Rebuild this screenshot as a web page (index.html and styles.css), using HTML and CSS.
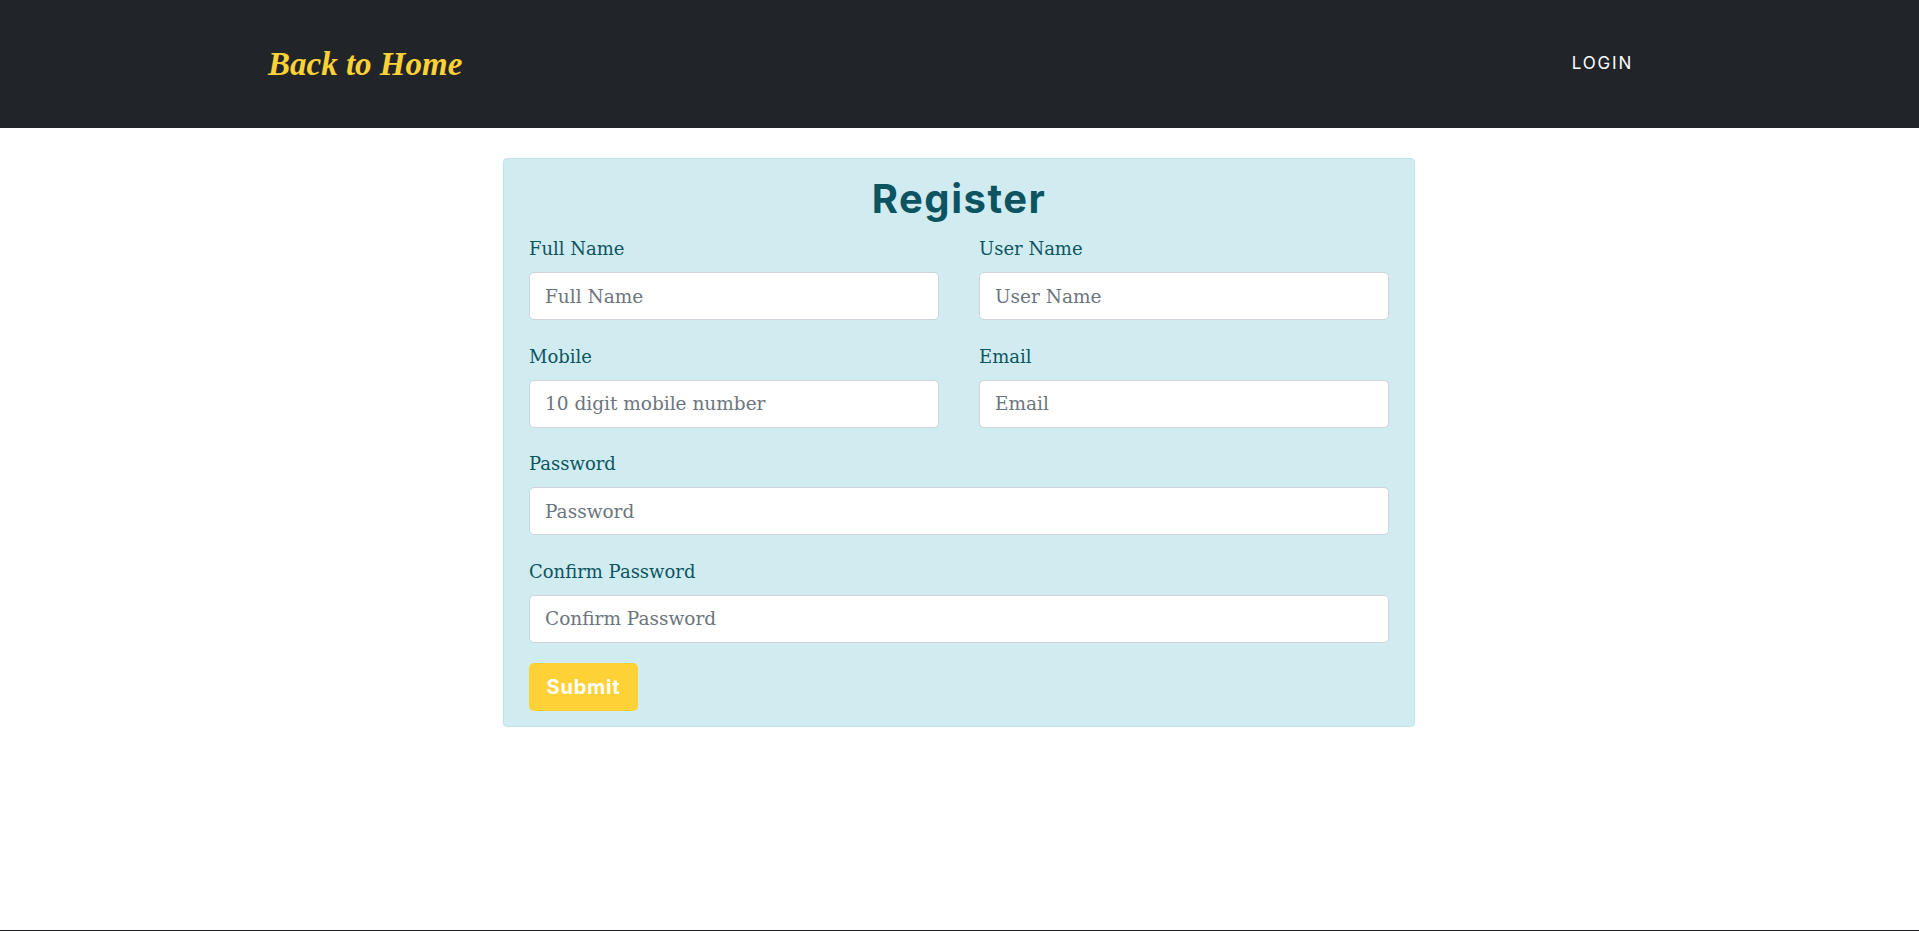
FILE: index.html
```html
<!DOCTYPE html>
<html lang="en">
<head>
<meta charset="utf-8">
<title>Register</title>
<link rel="stylesheet" href="styles.css">
</head>
<body>
<nav class="navbar">
  <a class="brand" href="#">Back to Home</a>
  <a class="nav-link" href="#">Login</a>
</nav>
<main class="main">
  <form class="card">
    <h1 class="title">Register</h1>
    <div class="grid">
      <div class="group">
        <label class="label">Full Name</label>
        <input class="input" type="text" placeholder="Full Name">
      </div>
      <div class="group">
        <label class="label">User Name</label>
        <input class="input" type="text" placeholder="User Name">
      </div>
      <div class="group">
        <label class="label">Mobile</label>
        <input class="input" type="text" placeholder="10 digit mobile number">
      </div>
      <div class="group">
        <label class="label">Email</label>
        <input class="input" type="text" placeholder="Email">
      </div>
      <div class="group wide">
        <label class="label">Password</label>
        <input class="input" type="password" placeholder="Password">
      </div>
      <div class="group wide">
        <label class="label">Confirm Password</label>
        <input class="input" type="password" placeholder="Confirm Password">
      </div>
    </div>
    <button class="submit" type="button">Submit</button>
  </form>
</main>
<footer class="footer"></footer>
</body>
</html>
```
FILE: styles.css
```css
* { box-sizing: border-box; }
html, body { margin: 0; padding: 0; }
body {
  background: #fff;
  font-family: "DejaVu Serif", serif;
  color: #212529;
}
.navbar {
  height: 128px;
  background: #212529;
  display: flex;
  align-items: center;
  justify-content: space-between;
  padding: 0 270px 0 268px;
}
.brand {
  font-family: "Liberation Serif", serif;
  font-style: italic;
  font-weight: bold;
  font-size: 33px;
  line-height: 1;
  color: #fed136;
  text-decoration: none;
}
.nav-link {
  font-family: "Inter", sans-serif;
  font-size: 17px;
  line-height: 1;
  letter-spacing: 1.8px;
  text-transform: uppercase;
  color: #fff;
  text-decoration: none;
  padding: 0 16px 2px;
}
.main {
  min-height: 802px;
  padding: 30px 1px 0 0;
}
.card {
  width: 912px;
  margin: 0 auto;
  background: #d1ecf1;
  border: 1px solid #bee5eb;
  border-radius: 4px;
  padding: 16px 25px 15.5px 25px;
}
.title {
  margin: 0 0 12px;
  text-align: center;
  font-family: "Inter", sans-serif;
  font-weight: 700;
  font-size: 40px;
  line-height: 48px;
  letter-spacing: 1.5px;
  color: #0c5460;
}
.grid {
  display: grid;
  grid-template-columns: 1fr 1fr;
  column-gap: 40px;
  row-gap: 22.67px;
}
.group { display: flex; flex-direction: column; }
.wide { grid-column: 1 / -1; }
.label {
  font-size: 18px;
  line-height: 27px;
  color: #0c5460;
  margin-bottom: 10px;
}
.input {
  height: 48px;
  border: 1px solid #ced4da;
  border-radius: 5px;
  background: #fff;
  padding: 0 15px;
  font-family: "DejaVu Serif", serif;
  font-size: 18.5px;
  color: #495057;
  outline: none;
}
.input::placeholder { color: #6c757d; opacity: 1; }
.submit {
  display: block;
  margin-top: 20px;
  width: 109px;
  height: 48px;
  border: 0;
  border-radius: 5px;
  background: #fed136;
  color: #fff;
  font-family: "Inter", sans-serif;
  font-weight: 700;
  font-size: 20px;
  letter-spacing: 0.8px;
  padding: 0;
}
.footer {
  height: 40px;
  background: #1d1a2b;
}
```
